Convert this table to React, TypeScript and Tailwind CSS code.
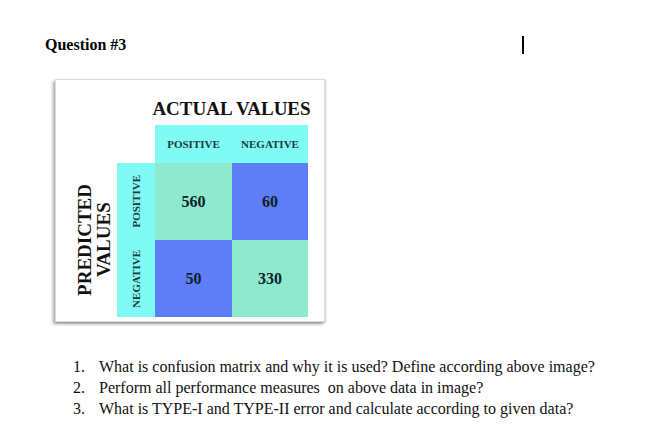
import React from "react";

const serif = { fontFamily: '"Liberation Serif", "Times New Roman", serif' };

export default function App() {
  const items = [
    "What is confusion matrix and why it is used? Define according above image?",
    "Perform all performance measures  on above data in image?",
    "What is TYPE-I and TYPE-II error and calculate according to given data?",
  ];
  return (
    <div className="w-[670px] h-[439px] bg-white text-black overflow-hidden font-['Liberation_Serif',serif]" style={serif}>
      <div className="flex items-start pt-[36px] pl-[45px] pr-[146px] h-[79px]">
        <div className="font-bold text-[16px] leading-[18px]">Question #3</div>
        <div className="ml-auto w-[2px] h-[18px] bg-black" />
      </div>

      <div className="ml-[55px] w-[270px] h-[243px] bg-white border border-[#dcdcdc] shadow-[-2px_2px_3px_rgba(0,0,0,0.35),1px_1px_2px_rgba(0,0,0,0.2)]">
        <div className="grid grid-cols-[61px_38px_77px_76px] grid-rows-[45px_38px_77px_77px]">
          <div className="col-start-3 col-span-2 row-start-1 flex items-end justify-center pb-[7px]">
            <span className="font-bold text-[19px] leading-[19px] whitespace-nowrap text-[#111]">ACTUAL VALUES</span>
          </div>

          <div className="col-start-3 row-start-2 bg-[#80faf4] flex items-center justify-center">
            <span className="font-bold text-[11px] text-[#1d3a3a]">POSITIVE</span>
          </div>
          <div className="col-start-4 row-start-2 bg-[#80faf4] flex items-center justify-center">
            <span className="font-bold text-[11px] text-[#1d3a3a]">NEGATIVE</span>
          </div>

          <div className="col-start-1 row-start-3 row-span-2 flex items-center justify-start pl-[19px]">
            <span className="font-bold text-[19px] leading-[19px] text-center whitespace-nowrap text-[#111] [writing-mode:vertical-rl] rotate-180">
              PREDICTED
              <br />
              VALUES
            </span>
          </div>

          <div className="col-start-2 row-start-3 bg-[#80faf4] flex items-center justify-center">
            <span className="font-bold text-[11px] text-[#1d3a3a] [writing-mode:vertical-rl] rotate-180 whitespace-nowrap">POSITIVE</span>
          </div>
          <div className="col-start-2 row-start-4 bg-[#80faf4] flex items-center justify-center">
            <span className="font-bold text-[11px] text-[#1d3a3a] [writing-mode:vertical-rl] rotate-180 whitespace-nowrap">NEGATIVE</span>
          </div>

          <div className="col-start-3 row-start-3 bg-[#8deacf] flex items-center justify-center">
            <span className="font-bold text-[16px] text-[#102028]">560</span>
          </div>
          <div className="col-start-4 row-start-3 bg-[#5e7ef8] flex items-center justify-center">
            <span className="font-bold text-[16px] text-[#102028]">60</span>
          </div>
          <div className="col-start-3 row-start-4 bg-[#5e7ef8] flex items-center justify-center">
            <span className="font-bold text-[16px] text-[#102028]">50</span>
          </div>
          <div className="col-start-4 row-start-4 bg-[#8deacf] flex items-center justify-center">
            <span className="font-bold text-[16px] text-[#102028]">330</span>
          </div>
        </div>
      </div>

      <ol className="mt-[34px] pl-[73px] text-[16px] leading-[21px] text-[#111] font-['Liberation_Serif',serif]">
        {items.map((t, i) => (
          <li key={i} className="flex">
            <span className="w-[26px] shrink-0">{i + 1}.</span>
            <span className="whitespace-pre">{t}</span>
          </li>
        ))}
      </ol>
    </div>
  );
}
